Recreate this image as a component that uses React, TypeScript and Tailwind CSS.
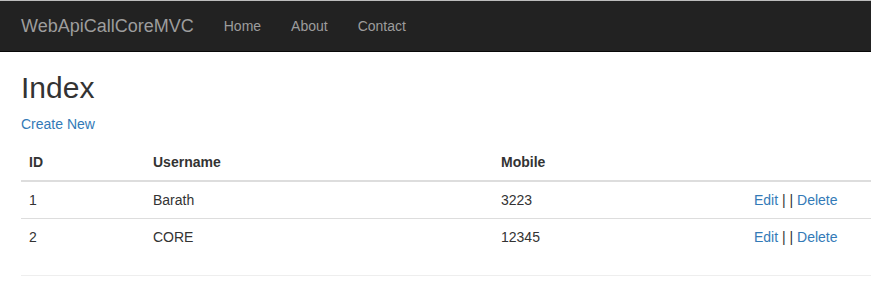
const users = [
  { id: 1, username: "Barath", mobile: "3223" },
  { id: 2, username: "CORE", mobile: "12345" },
];

const navLinks = ["Home", "About", "Contact"];

const App = () => {
  return (
    <div className="min-h-screen bg-white text-[14px] leading-[20px] text-[#333] font-['Liberation_Sans',Arial,sans-serif] overflow-hidden">
      {/* Top navbar */}
      <nav className="h-[52px] bg-[#222] border-t border-t-[#bdbdbd] border-b border-b-[#080808] flex items-start pl-[6px]">
        <a className="px-[15px] py-[15px] text-[18px] leading-[20px] text-[#9d9d9d]">
          WebApiCallCoreMVC
        </a>
        <ul className="flex">
          {navLinks.map((link) => (
            <li key={link}>
              <a className="block px-[15px] py-[15px] text-[#9d9d9d]">{link}</a>
            </li>
          ))}
        </ul>
      </nav>

      <div className="pl-[21px]">
        <h2 className="mt-[19px] mb-[10px] text-[30px] leading-[33px] font-normal">Index</h2>
        <p className="mb-[10px]">
          <a className="text-[#337ab7]">Create New</a>
        </p>

        {/* Users table */}
        <table className="w-[850px] border-collapse mb-[20px] table-fixed">
          <thead>
            <tr className="border-b-2 border-[#ddd]">
              <th className="w-[124px] p-[8px] text-left font-bold">ID</th>
              <th className="w-[348px] p-[8px] text-left font-bold">Username</th>
              <th className="w-[253px] p-[8px] text-left font-bold">Mobile</th>
              <th className="p-[8px]"></th>
            </tr>
          </thead>
          <tbody>
            {users.map((u) => (
              <tr key={u.id} className="border-t border-[#ddd]">
                <td className="p-[8px]">{u.id}</td>
                <td className="p-[8px]">{u.username}</td>
                <td className="p-[8px]">{u.mobile}</td>
                <td className="p-[8px] whitespace-nowrap">
                  <a className="text-[#337ab7]">Edit</a> | |{" "}
                  <a className="text-[#337ab7]">Delete</a>
                </td>
              </tr>
            ))}
          </tbody>
        </table>

        <hr className="border-t border-[#eee] mt-[20px]" />
      </div>
    </div>
  );
};

export default App;
